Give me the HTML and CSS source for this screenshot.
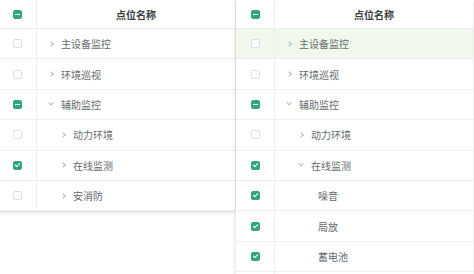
FILE: index.html
```html
<!DOCTYPE html>
<html lang="zh-CN">
<head>
    <meta charset="utf-8">
    <link rel="stylesheet" href="styles.css">
</head>
<body>
    <main class="panels">
        <!-- 折叠状态 -->
        <section class="tree-table">
            <div class="tree-row tree-head">
                <div class="cell-check"><span class="checkbox is-half"></span></div>
                <div class="cell-name">点位名称</div>
            </div>
            <div class="tree-row">
                <div class="cell-check"><span class="checkbox"></span></div>
                <div class="cell-name"><span class="arrow arrow-right"></span>主设备监控</div>
            </div>
            <div class="tree-row">
                <div class="cell-check"><span class="checkbox"></span></div>
                <div class="cell-name"><span class="arrow arrow-right"></span>环境巡视</div>
            </div>
            <div class="tree-row">
                <div class="cell-check"><span class="checkbox is-half"></span></div>
                <div class="cell-name"><span class="arrow arrow-down"></span>辅助监控</div>
            </div>
            <div class="tree-row">
                <div class="cell-check"><span class="checkbox"></span></div>
                <div class="cell-name"><span class="indent"></span><span class="arrow arrow-right"></span>动力环境</div>
            </div>
            <div class="tree-row">
                <div class="cell-check"><span class="checkbox is-checked"></span></div>
                <div class="cell-name"><span class="indent"></span><span class="arrow arrow-right"></span>在线监测</div>
            </div>
            <div class="tree-row">
                <div class="cell-check"><span class="checkbox"></span></div>
                <div class="cell-name"><span class="indent"></span><span class="arrow arrow-right"></span>安消防</div>
            </div>
        </section>

        <!-- 展开状态 -->
        <section class="tree-table">
            <div class="tree-row tree-head">
                <div class="cell-check"><span class="checkbox is-half"></span></div>
                <div class="cell-name">点位名称</div>
            </div>
            <div class="tree-row is-hover">
                <div class="cell-check"><span class="checkbox"></span></div>
                <div class="cell-name"><span class="arrow arrow-right"></span>主设备监控</div>
            </div>
            <div class="tree-row">
                <div class="cell-check"><span class="checkbox"></span></div>
                <div class="cell-name"><span class="arrow arrow-right"></span>环境巡视</div>
            </div>
            <div class="tree-row">
                <div class="cell-check"><span class="checkbox is-half"></span></div>
                <div class="cell-name"><span class="arrow arrow-down"></span>辅助监控</div>
            </div>
            <div class="tree-row">
                <div class="cell-check"><span class="checkbox"></span></div>
                <div class="cell-name"><span class="indent"></span><span class="arrow arrow-right"></span>动力环境</div>
            </div>
            <div class="tree-row">
                <div class="cell-check"><span class="checkbox is-checked"></span></div>
                <div class="cell-name"><span class="indent"></span><span class="arrow arrow-down"></span>在线监测</div>
            </div>
            <div class="tree-row">
                <div class="cell-check"><span class="checkbox is-checked"></span></div>
                <div class="cell-name"><span class="indent indent-2"></span><span class="leaf"></span>噪音</div>
            </div>
            <div class="tree-row">
                <div class="cell-check"><span class="checkbox is-checked"></span></div>
                <div class="cell-name"><span class="indent indent-2"></span><span class="leaf"></span>局放</div>
            </div>
            <div class="tree-row">
                <div class="cell-check"><span class="checkbox is-checked"></span></div>
                <div class="cell-name"><span class="indent indent-2"></span><span class="leaf"></span>蓄电池</div>
            </div>
            <!-- 下方还有行，超出可视区域 -->
            <div class="tree-row">
                <div class="cell-check"></div>
                <div class="cell-name"></div>
            </div>
        </section>
    </main>
</body>
</html>
```

FILE: styles.css
```css
/* 基础 */
body {
    margin: 0;
    background: #fff;
    font-family: "Noto Sans CJK SC", "Noto Sans", sans-serif;
    font-size: 10px;
    color: #666a70;
}

.panels {
    display: flex;
    align-items: flex-start;
    gap: 1px;
    margin-left: -2px;
}

/* 树形表格 */
.tree-table {
    width: 237px;
    flex-shrink: 0;
    background: #fff;
    box-shadow: 0 1px 4px rgba(0,0,0,0.18);
}

.tree-row {
    display: grid;
    grid-template-columns: 39px 1fr;
    height: 30.4px;
    box-sizing: border-box;
    border-bottom: 1px solid #ebeef5;
}

.tree-row.is-hover {
    background: #f0f8ec;
}

.tree-head {
    height: 29px;
    font-weight: bold;
    color: #3a3c40;
}

.cell-check {
    display: flex;
    align-items: center;
    justify-content: center;
    border-right: 1px solid #ebeef5;
}

.cell-name {
    display: flex;
    align-items: center;
    padding-left: 10px;
}

.tree-head .cell-name {
    justify-content: center;
    padding-left: 0;
}

/* 复选框 */
.checkbox {
    position: relative;
    width: 9px;
    height: 9px;
    box-sizing: border-box;
    border: 1px solid #dcdfe6;
    border-radius: 2px;
    background: #fff;
}

.checkbox.is-checked,
.checkbox.is-half {
    border-color: #2fa67c;
    background: #2fa67c;
}

.checkbox.is-half::after {
    content: "";
    position: absolute;
    left: 1px;
    right: 1px;
    top: 3px;
    height: 1px;
    background: #fff;
}

.checkbox.is-checked::after {
    content: "";
    position: absolute;
    left: 2px;
    top: 0;
    width: 2px;
    height: 4px;
    border: solid #fff;
    border-width: 0 1px 1px 0;
    transform: rotate(45deg);
}

/* 展开箭头 */
.indent { width: 12px; flex-shrink: 0; }
.indent-2 { width: 24px; }
.leaf { width: 9px; flex-shrink: 0; }

.arrow {
    width: 8px;
    height: 8px;
    margin-right: 6px;
    flex-shrink: 0;
    display: flex;
    align-items: center;
    justify-content: center;
}

.arrow::before {
    content: "";
    width: 3px;
    height: 3px;
    border: solid #b4b8bf;
    border-width: 0 1px 1px 0;
}

.arrow-right::before { transform: rotate(-45deg); }
.arrow-down::before { transform: rotate(45deg) translate(-1px, -1px); }
```
